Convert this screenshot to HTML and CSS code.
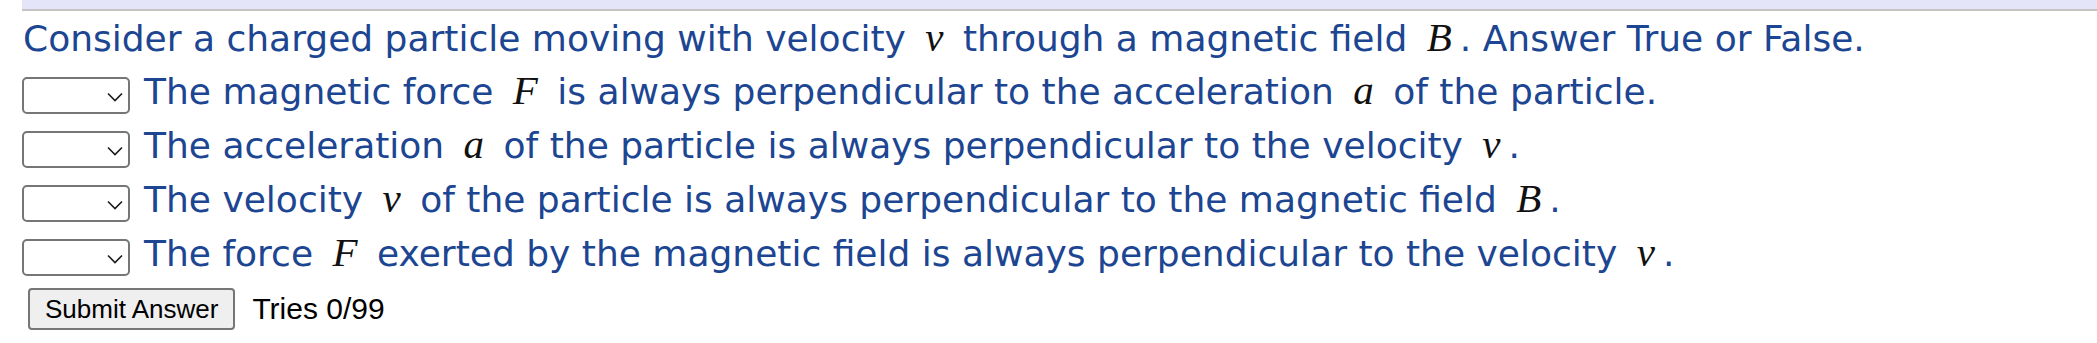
FILE: index.html
```html
<!DOCTYPE html>
<html lang="en">
<head>
  <meta charset="UTF-8" />
  <title>Problem</title>
  <link rel="stylesheet" href="styles.css">
</head>
<body>
  <div class="band"></div>

  <div class="problem">
    <p class="question">Consider a charged particle moving with velocity <span class="mi">v</span> through a magnetic field <span class="mi">B</span>. Answer True or False.</p>

    <div class="row">
      <div class="pick">
        <select><option></option><option>True</option><option>False</option></select>
        <svg class="chev" width="16" height="10" viewBox="0 0 16 10"><path d="M1 1.5 L8 8.5 L15 1.5" fill="none" stroke="#1a1a1a" stroke-width="1.6"/></svg>
      </div>
      <span class="stmt">The magnetic force <span class="mi">F</span> is always perpendicular to the acceleration <span class="mi">a</span> of the particle.</span>
    </div>
    <div class="row">
      <div class="pick">
        <select><option></option><option>True</option><option>False</option></select>
        <svg class="chev" width="16" height="10" viewBox="0 0 16 10"><path d="M1 1.5 L8 8.5 L15 1.5" fill="none" stroke="#1a1a1a" stroke-width="1.6"/></svg>
      </div>
      <span class="stmt">The acceleration <span class="mi">a</span> of the particle is always perpendicular to the velocity <span class="mi">v</span>.</span>
    </div>
    <div class="row">
      <div class="pick">
        <select><option></option><option>True</option><option>False</option></select>
        <svg class="chev" width="16" height="10" viewBox="0 0 16 10"><path d="M1 1.5 L8 8.5 L15 1.5" fill="none" stroke="#1a1a1a" stroke-width="1.6"/></svg>
      </div>
      <span class="stmt">The velocity <span class="mi">v</span> of the particle is always perpendicular to the magnetic field <span class="mi">B</span>.</span>
    </div>
    <div class="row">
      <div class="pick">
        <select><option></option><option>True</option><option>False</option></select>
        <svg class="chev" width="16" height="10" viewBox="0 0 16 10"><path d="M1 1.5 L8 8.5 L15 1.5" fill="none" stroke="#1a1a1a" stroke-width="1.6"/></svg>
      </div>
      <span class="stmt">The force <span class="mi">F</span> exerted by the magnetic field is always perpendicular to the velocity <span class="mi">v</span>.</span>
    </div>

    <div class="submit-row">
      <button class="submit">Submit Answer</button>
      <span class="tries">Tries 0/99</span>
    </div>
  </div>
</body>
</html>
```

FILE: styles.css
```css
body {
  margin: 0;
  background: #fff;
  font-family: "DejaVu Sans", Verdana, sans-serif;
  color: #1c4592;
}
.band {
  margin-left: 22px;
  height: 9px;
  background: #e5e5fa;
  border-bottom: 2px solid #c4c4c4;
}
.problem {
  padding-left: 22px;
}
.question {
  margin: 2px 0 0 1px;
  font-size: 36px;
  line-height: 51px;
  white-space: nowrap;
}
.mi {
  font-family: "Liberation Serif", serif;
  font-style: italic;
  font-size: 41px;
  color: #111;
  margin: 0 8px;
  line-height: 0;
}
.row {
  display: flex;
  align-items: flex-start;
  height: 54px;
}
.pick {
  position: relative;
  margin-top: 13px;
  margin-right: 14px;
}
.pick select {
  appearance: none;
  width: 108px;
  height: 37px;
  border: 2px solid #767676;
  border-radius: 5px;
  background: #fff;
  display: block;
}
.chev {
  position: absolute;
  left: 85px;
  top: 15px;
  pointer-events: none;
}
.stmt {
  font-size: 36px;
  line-height: 56px;
  white-space: nowrap;
}
.submit-row {
  display: flex;
  align-items: center;
  gap: 17px;
  margin-top: 8px;
  padding-left: 6px;
  font-family: "Liberation Sans", Arial, sans-serif;
  color: #000;
}
.submit {
  height: 42px;
  padding: 0 15px;
  font-family: "Liberation Sans", Arial, sans-serif;
  font-size: 26px;
  color: #000;
  background: #efefef;
  border: 2px solid #767676;
  border-radius: 4px;
}
.tries {
  font-size: 30px;
}
```
